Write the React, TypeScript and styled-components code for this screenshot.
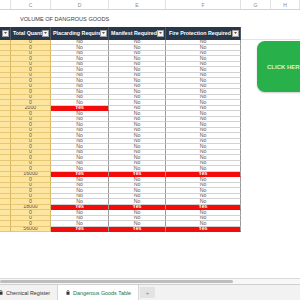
import * as React from "react";
import styled, { createGlobalStyle } from "styled-components";

const GlobalStyle = createGlobalStyle`
  html, body {
    margin: 0;
    padding: 0;
    background: #ffffff;
  }
  body {
    font-family: "Liberation Sans", Arial, sans-serif;
  }
`;

const COLS = "11px 40px 58px 57px 75px";

const Page = styled.div`
  width: 300px;
  height: 300px;
  overflow: hidden;
  display: flex;
  flex-direction: column;
  background: #ffffff;
`;

const ColHeaders = styled.div`
  display: grid;
  grid-template-columns: ${COLS} 30px 1fr;
  height: 10px;
  flex: none;
  border-bottom: 1px solid #d4d4d4;
  box-sizing: border-box;
`;

const ColLetter = styled.div`
  display: flex;
  align-items: center;
  justify-content: center;
  font-size: 5px;
  color: #8a8a8a;
  border-right: 1px solid #e2e2e2;
`;

const Sheet = styled.div`
  flex: 1;
  display: flex;
  min-height: 0;
`;

const TableArea = styled.div`
  width: 241px;
  flex: none;
  display: flex;
  flex-direction: column;
`;

const Title = styled.div`
  height: 10px;
  margin-top: 4px;
  margin-bottom: 3px;
  padding-left: 20px;
  font-size: 5.6px;
  line-height: 10px;
  color: #3a3a3a;
  white-space: nowrap;
`;

const HeaderRow = styled.div`
  display: grid;
  grid-template-columns: ${COLS};
  height: 12.5px;
  background: #28374a;
`;

const HeadCell = styled.div`
  display: flex;
  align-items: center;
  min-width: 0;
  padding-right: 1px;
  border-right: 1px solid #4a586a;
`;

const HeadText = styled.span`
  flex: 1;
  min-width: 0;
  overflow: hidden;
  white-space: nowrap;
  text-align: center;
  padding-left: 2px;
  font-size: 5.3px;
  font-weight: 700;
  color: #ffffff;
`;

const FilterButton = styled.span`
  flex: none;
  width: 5px;
  height: 5px;
  background: #f4f4f4;
  border: 0.5px solid #9c9c9c;
  display: flex;
  align-items: center;
  justify-content: center;
`;

const DataRow = styled.div`
  display: grid;
  grid-template-columns: ${COLS};
  height: 5.5px;
`;

type Kind = "yellow" | "white" | "red";

const Cell = styled.div<{ $kind: Kind }>`
  box-sizing: border-box;
  display: flex;
  align-items: center;
  justify-content: center;
  overflow: hidden;
  font-size: 5.2px;
  line-height: 1;
  background: ${p =>
    p.$kind === "yellow" ? "#fde59f" : p.$kind === "red" ? "#f20c0c" : "#ffffff"};
  color: ${p => (p.$kind === "red" ? "#ffffff" : "#555555")};
  font-weight: ${p => (p.$kind === "red" ? 700 : 400)};
  border-bottom: 1px solid
    ${p => (p.$kind === "yellow" ? "#e6c874" : p.$kind === "red" ? "#f20c0c" : "#d2d2d2")};
  border-right: 1px solid
    ${p => (p.$kind === "yellow" ? "#d8b865" : "#9a9a9a")};
`;

const Side = styled.div`
  flex: 1;
  min-width: 0;
  display: flex;
  flex-direction: column;
`;

const SideLine = styled.div`
  height: 29.5px;
  border-bottom: 1px solid #e4e4e4;
  box-sizing: border-box;
`;

const ClickButton = styled.div`
  margin: 1.5px 0 0 16px;
  width: 82px;
  height: 51px;
  flex: none;
  border-radius: 8px;
  background: #28b04b;
  box-shadow: 0 1px 2px rgba(0, 0, 0, 0.2);
  display: flex;
  align-items: center;
  padding-left: 10px;
  box-sizing: border-box;
  font-size: 6px;
  font-weight: 700;
  color: #dff4cf;
  white-space: nowrap;
`;

const Scrollbar = styled.div`
  height: 6px;
  flex: none;
  background: #f7f7f7;
  border-top: 1px solid #d9d9d9;
  box-sizing: border-box;
  display: flex;
  align-items: center;
`;

const Thumb = styled.div`
  width: 233px;
  height: 3px;
  border-radius: 2px;
  background: #bdbdbd;
`;

const Tabs = styled.div`
  height: 16px;
  flex: none;
  display: flex;
  align-items: stretch;
  background: #f2f2f2;
  border-top: 1px solid #d0d0d0;
  box-sizing: border-box;
  margin-left: -3px;
`;

const Tab = styled.div<{ $active?: boolean }>`
  display: flex;
  align-items: center;
  gap: 3px;
  padding: 0 7px 0 2px;
  font-size: 5.4px;
  white-space: nowrap;
  color: ${p => (p.$active ? "#217346" : "#333333")};
  background: ${p => (p.$active ? "#ffffff" : "transparent")};
  border-right: 1px solid #d6d6d6;
  padding-left: ${p => (p.$active ? "8px" : "2px")};
`;

const AddTab = styled.div`
  margin: 2px 0 2px 1px;
  width: 15px;
  display: flex;
  align-items: center;
  justify-content: center;
  background: #e3e3e3;
  color: #8a8a8a;
  font-size: 6px;
`;

const Lock = () => (
  <svg width="4" height="5" viewBox="0 0 8 10">
    <path d="M2 4V3a2 2 0 0 1 4 0v1" stroke="#333" strokeWidth="1.4" fill="none" />
    <rect x="1" y="4" width="6" height="5.5" fill="#333" />
  </svg>
);

const Arrow = () => (
  <svg width="3" height="2" viewBox="0 0 6 4">
    <path d="M0 0h6L3 4z" fill="#555" />
  </svg>
);

type Row = { qty: string; flags: [boolean, boolean, boolean] };

const special: Record<number, Row> = {
  12: { qty: "2000", flags: [true, false, false] },
  24: { qty: "16000", flags: [true, true, true] },
  30: { qty: "18000", flags: [true, true, true] },
  34: { qty: "56000", flags: [true, true, true] },
};

const rows: Row[] = Array.from({ length: 35 }, (_, i) =>
  special[i] ? special[i] : { qty: "0", flags: [false, false, false] }
);

const headers = ["", "Total Quantity", "Placarding Required", "Manifest Required", "Fire Protection Required"];

const App: React.FC = () => (
  <Page>
    <GlobalStyle />
    <ColHeaders>
      {["", "C", "D", "E", "F", "G", "H"].map((l, i) => (
        <ColLetter key={i}>{l}</ColLetter>
      ))}
    </ColHeaders>
    <Sheet>
      <TableArea>
        <Title>VOLUME OF DANGROUS GOODS</Title>
        <HeaderRow>
          {headers.map((h, i) => (
            <HeadCell key={i}>
              <HeadText>{h}</HeadText>
              <FilterButton>
                <Arrow />
              </FilterButton>
            </HeadCell>
          ))}
        </HeaderRow>
        {rows.map((r, i) => (
          <DataRow key={i}>
            <Cell $kind="yellow" />
            <Cell $kind="yellow">{r.qty}</Cell>
            {r.flags.map((f, j) => (
              <Cell key={j} $kind={f ? "red" : "white"}>
                {f ? "Yes" : "No"}
              </Cell>
            ))}
          </DataRow>
        ))}
      </TableArea>
      <Side>
        <SideLine />
        <ClickButton>CLICK HERE</ClickButton>
      </Side>
    </Sheet>
    <Scrollbar>
      <Thumb />
    </Scrollbar>
    <Tabs>
      <Tab>
        <Lock />
        Chemical Register
      </Tab>
      <Tab $active>
        <Lock />
        Dangerous Goods Table
      </Tab>
      <AddTab>+</AddTab>
    </Tabs>
  </Page>
);

export default App;
